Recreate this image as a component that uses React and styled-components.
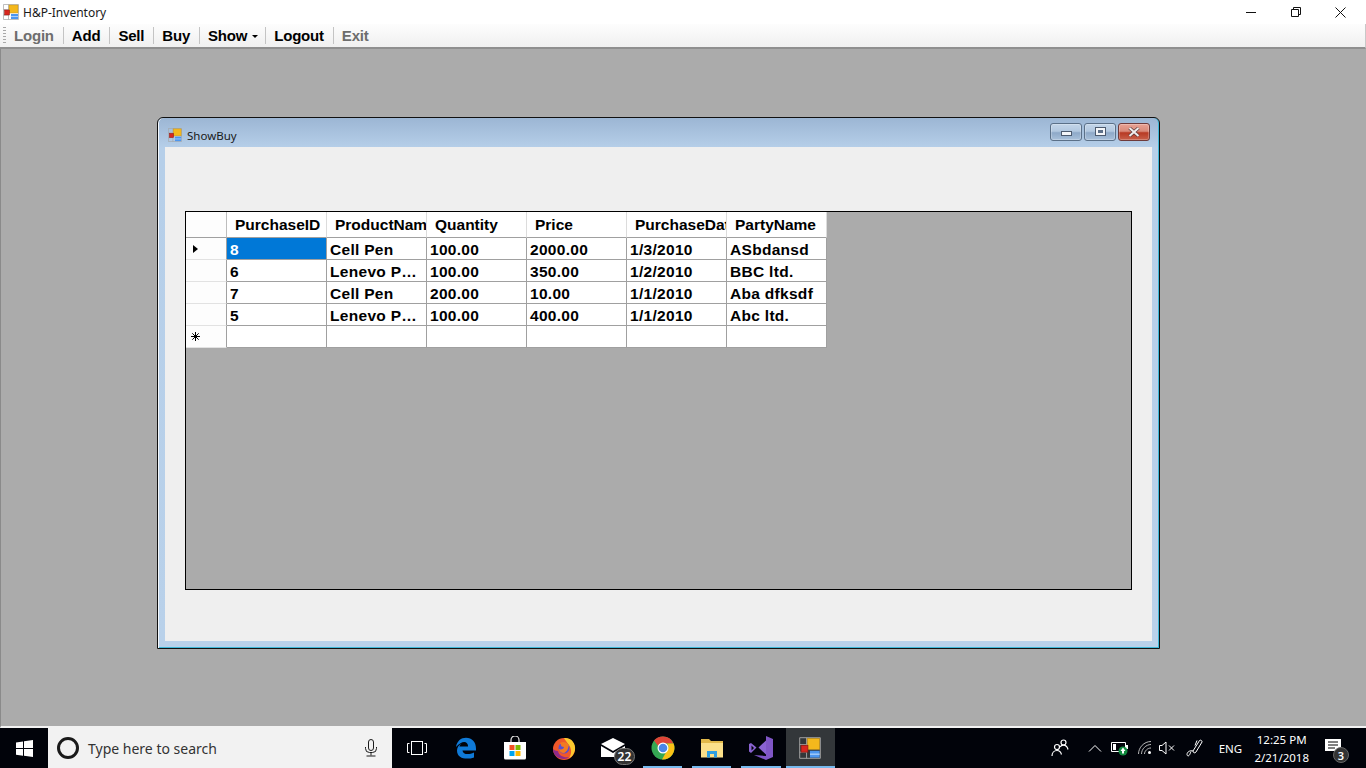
// libs
import styled, { createGlobalStyle } from 'styled-components'

const columns = ['PurchaseID', 'ProductName', 'Quantity', 'Price', 'PurchaseDate', 'PartyName']

const rows = [
    ['8', 'Cell Pen', '100.00', '2000.00', '1/3/2010', 'ASbdansd'],
    ['6', 'Lenevo Pen Drive', '100.00', '350.00', '1/2/2010', 'BBC ltd.'],
    ['7', 'Cell Pen', '200.00', '10.00', '1/1/2010', 'Aba dfksdf'],
    ['5', 'Lenevo Pen Drive', '100.00', '400.00', '1/1/2010', 'Abc ltd.'],
    ['', '', '', '', '', ''],
]

const menu = [
    { label: 'Login', off: true },
    { label: 'Add' },
    { label: 'Sell' },
    { label: 'Buy' },
    { label: 'Show', caret: true },
    { label: 'Logout' },
    { label: 'Exit', off: true },
]

const AppIcon = ({ size = 16 }) => (
    <svg width={size} height={size} viewBox="0 0 16 16">
        <path d="M.5.5h15v15H.5z M.5 5.5h6 M5.500.5v15 M.5 11h5" fill="none" stroke="#a3a3a3" strokeWidth=".7" />
        <rect x="6" y="1" width="9" height="8" fill="#f4b81c" stroke="#c29422" strokeWidth=".5" />
        <rect x="1.500" y="6" width="5" height="5" fill="#d8261f" stroke="#8a1a14" strokeWidth=".5" />
        <rect x="8" y="10" width="7" height="5" fill="#4d96ee" />
        <rect x="8" y="12" width="7" height="1" fill="#a9cdf8" />
    </svg>
)

const Windows = () => (
    <svg width="17" height="17" viewBox="0 0 17 17" fill="#fff">
        <path d="M0 2.400 7 1.400v6.700H0zM8 1.300 17 0v8.100H8zM0 9h7v6.700l-7-1zM8 9h9v8l-9-1.300z" />
    </svg>
)

const Mic = () => (
    <svg width="14" height="18" viewBox="0 0 14 18" fill="none" stroke="#1c1c1c" strokeWidth="1">
        <rect x="4.500" y=".5" width="5" height="11" rx="2.500" />
        <path d="M1.500 8v1.500a4 4 0 0 0 4 4h3a4 4 0 0 0 4-4V8M7 13.500v3M2.500 17h9" />
    </svg>
)

const TaskView = () => (
    <svg width="20" height="16" viewBox="0 0 20 16" fill="none" stroke="#fff" strokeWidth="1">
        <rect x="4.500" y="1.500" width="11" height="13" />
        <path d="M2.500 3.500H.5v9h2M17.500 3.500h2v9h-2" />
    </svg>
)

const Edge = () => (
    <svg width="22" height="22" viewBox="0 0 22 22">
        <path
            d="M1 10C2 4 6 .8 11 .8c6 0 10 4 10 11v1.600H7.500c.3 3.600 5.500 5 11.500 2v5c-7 2.500-17 1.500-17-7 0-3 1.500-5.300 4.500-7-1 1-1.800 2-2 3.200h8.500C13.500 5 8 2 1 10z"
            fill="#0f7ad8"
        />
    </svg>
)

const Store = () => (
    <svg width="24" height="24" viewBox="0 0 24 24">
        <path d="M8 6V4a4 4 0 0 1 8 0v2" fill="none" stroke="#e8e8e8" strokeWidth="1.200" />
        <path d="M1 6h22v16a1.500 1.500 0 0 1-1.500 1.500h-19A1.500 1.500 0 0 1 1 22z" fill="#fff" />
        <rect x="6.500" y="9" width="5" height="5" fill="#f25022" />
        <rect x="12.500" y="9" width="5" height="5" fill="#7fba00" />
        <rect x="6.500" y="15" width="5" height="5" fill="#00a4ef" />
        <rect x="12.500" y="15" width="5" height="5" fill="#ffb900" />
    </svg>
)

const Firefox = () => (
    <svg width="24" height="24" viewBox="0 0 24 24">
        <circle cx="12" cy="13" r="11" fill="#f0582a" />
        <path d="M12 2c7-1 12 5 11 12-1 4-3 7-6 8 3-4 3-10-1-14-1-2-3-4-4-6z" fill="#fcc92e" />
        <path d="M1 13c0 6 5 10 11 10 2 0 4-1 5-2-5 1-10-1-11-6-2 0-4-1-5-2z" fill="#8e2a8a" />
        <circle cx="12" cy="12" r="5.500" fill="#5a4fcf" />
        <path d="M8 7c3-2 7-1 9 2-1 3-1 6-5 8-3 0-5-2-5-4 2 1 5 0 5-2-2 0-3-1-3-2 0-1-1-1-1-2z" fill="#f47a20" />
    </svg>
)

const Mail = () => (
    <svg width="24" height="20" viewBox="0 0 24 20">
        <path d="M0 6 12 0l12 6-12 7z" fill="#fff" />
        <path d="M0 8l12 7 12-7v11H0z" fill="#fff" />
    </svg>
)

const Chrome = () => (
    <svg width="24" height="24" viewBox="0 0 24 24">
        <circle cx="12" cy="12" r="11.500" fill="#35a853" />
        <path d="M12 .5A11.500 11.500 0 0 1 22.500 7.500H12a4.500 4.500 0 0 0-4.500 3L3 4.500A11.500 11.500 0 0 1 12 .5z" fill="#de4437" />
        <path d="M22.500 7.500A11.500 11.500 0 0 1 11 23.500l5-9a5 5 0 0 0 0-7z" fill="#fbc116" />
        <circle cx="12" cy="12" r="5.500" fill="#fff" />
        <circle cx="12" cy="12" r="4.300" fill="#4a86e8" />
    </svg>
)

const Explorer = () => (
    <svg width="22" height="20" viewBox="0 0 22 20">
        <path d="M0 1h8l2 2h12v4H0z" fill="#e2b94a" />
        <path d="M0 5h22v14.500H0z" fill="#fbe08a" />
        <path d="M6 19.500V13h10v6.500h-3V16H9v3.500z" fill="#2f9fe0" />
    </svg>
)

const VisualStudio = () => (
    <svg width="24" height="24" viewBox="0 0 24 24">
        <path d="M17 0l7 3v18l-7 3L5 19l12 1z" fill="#7f56c6" />
        <path d="M17 4.500v14l-7.500-7zM0 8l2-1 5.500 4.500L2 17l-2-1.500zM2.500 9.500v5l2.500-2.500z" fill="#8a63d2" />
    </svg>
)

const People = () => (
    <svg width="18" height="18" viewBox="0 0 18 18" fill="none" stroke="#fff" strokeWidth="1.200">
        <circle cx="6" cy="8" r="2.500" />
        <path d="M1 17c0-3 2-5.500 5-5.500s4 2 4.500 4" />
        <circle cx="12.500" cy="3.500" r="2.500" />
        <path d="M9 8c1-1.500 2.500-2 4-1.800 2 .3 3.500 2 4 4.300" />
    </svg>
)

const Caret = () => (
    <svg width="14" height="8" viewBox="0 0 14 8" fill="none" stroke="#fff" strokeWidth="1">
        <path d="M1 7.500 7 1.500l6 6" />
    </svg>
)

const Battery = () => (
    <svg width="18" height="16" viewBox="0 0 18 16">
        <path d="M.5 2.500h14v9H.5z" fill="none" stroke="#fff" />
        <rect x="2" y="4" width="3" height="6" fill="#fff" />
        <rect x="15" y="5" width="2" height="4" fill="#fff" />
        <circle cx="12" cy="11" r="4.500" fill="#10893e" />
        <path d="M12 7.500 14.500 11h-1.500v2.500h-2V11H9.500z" fill="#fff" />
    </svg>
)

const Wifi = () => (
    <svg width="14" height="14" viewBox="0 0 14 14" fill="none" stroke="#b8b8b8" strokeWidth="1">
        <path d="M.5 13C.5 6.500 6 .5 13 .5M3.500 13C3.500 8 8 3.500 13 3.500M6.500 13c0-3 3-6 6.500-6" />
        <circle cx="11.500" cy="11.500" r="1.500" fill="#fff" stroke="none" />
    </svg>
)

const Volume = () => (
    <svg width="16" height="14" viewBox="0 0 16 14" fill="none" stroke="#fff" strokeWidth="1">
        <path d="M.5 4.500h2.500L7 1v12L3 9.500H.5zM10 4.500l5 5M15 4.500l-5 5" />
    </svg>
)

const Pen = () => (
    <svg width="18" height="18" viewBox="0 0 18 18" fill="none" stroke="#fff" strokeWidth="1">
        <path d="M7 12 13.500 1.500c1-1 3 .3 2.500 1.500L10 13c-1 1.500-3 1-3-1z" />
        <path d="M7 12c-3-1-6 1-6 3.500 0 1 1 2 2 1s1-2 2-4M11 1.500l-2 5" />
    </svg>
)

const Notify = () => (
    <svg width="16" height="14" viewBox="0 0 16 14">
        <path d="M0 0h16v12H0z" fill="#fff" />
        <path d="M3 3h10M3 6h10M3 9h7" stroke="#000" strokeWidth="1" />
    </svg>
)

const NewRow = () => (
    <svg width="9" height="9" viewBox="0 0 9 9" stroke="#000" strokeWidth="1">
        <path d="M4.500 0v9M0 4.500h9M1.300 1.300l6.400 6.400M7.700 1.300l-6.400 6.400" />
    </svg>
)

const apps = [
    { icon: <TaskView /> },
    { icon: <Edge /> },
    { icon: <Store /> },
    { icon: <Firefox /> },
    { icon: <Mail />, badge: '22' },
    { icon: <Chrome />, open: true },
    { icon: <Explorer />, open: true },
    { icon: <VisualStudio />, open: true },
    { icon: <AppIcon size={22} />, open: true, active: true },
]

const App = () => {
    return (
        <Page>
            <GlobalStyle />
            <TitleBar>
                <AppIcon />
                <TitleText>H&amp;P-Inventory</TitleText>
                <WindowControls>
                    <ControlButton>
                        <svg width="10" height="10" viewBox="0 0 10 10" stroke="#111"><path d="M0 5.500h10" /></svg>
                    </ControlButton>
                    <ControlButton>
                        <svg width="10" height="10" viewBox="0 0 10 10" fill="none" stroke="#111"><path d="M.5 2.500h7v7h-7zM2.500 2.500v-2h7v7h-2" /></svg>
                    </ControlButton>
                    <ControlButton>
                        <svg width="11" height="11" viewBox="0 0 11 11" stroke="#111"><path d="M.5.500l10 10M10.500.500l-10 10" /></svg>
                    </ControlButton>
                </WindowControls>
            </TitleBar>

            <Toolbar>
                <Grip />
                {menu.map((item, i) => (
                    <MenuItem key={item.label} $off={item.off} $last={i === menu.length - 1} $caret={item.caret}>
                        {item.label}
                        {item.caret && <MenuCaret />}
                    </MenuItem>
                ))}
            </Toolbar>

            <Workspace>
                <ChildWindow>
                    <ChildTitle>
                        <AppIcon size={14} />
                        <ChildTitleText>ShowBuy</ChildTitleText>
                        <ChildControls>
                            <ChildButton>
                                <MinGlyph />
                            </ChildButton>
                            <ChildButton>
                                <svg width="11" height="9" viewBox="0 0 11 9"><rect x=".5" y=".5" width="10" height="8" fill="#f4f6f9" stroke="#4c5a6e" /><rect x="3" y="3" width="5" height="3" fill="#5d7088" /></svg>
                            </ChildButton>
                            <ChildButton $close>
                                <svg width="12" height="10" viewBox="0 0 12 10"><path d="M1.500 1l9 8M10.500 1l-9 8" stroke="#5a3a3a" strokeWidth="3.400" /><path d="M1.500 1l9 8M10.500 1l-9 8" stroke="#f2eeee" strokeWidth="2" /></svg>
                            </ChildButton>
                        </ChildControls>
                    </ChildTitle>
                    <Client>
                        <DataGrid>
                            <HeaderRow>
                                <RowHeader $top />
                                {columns.map(name => <HeaderCell key={name}>{name}</HeaderCell>)}
                            </HeaderRow>
                            {rows.map((row, r) => (
                                <Row key={r}>
                                    <RowHeader>
                                        {r === 0 && <RowArrow />}
                                        {r === rows.length - 1 && <NewRow />}
                                    </RowHeader>
                                    {row.map((value, c) => (
                                        <Cell key={c} $selected={r === 0 && c === 0}>{value}</Cell>
                                    ))}
                                </Row>
                            ))}
                        </DataGrid>
                    </Client>
                </ChildWindow>
            </Workspace>

            <Taskbar>
                <StartButton><Windows /></StartButton>
                <SearchBox>
                    <Cortana />
                    <SearchText>Type here to search</SearchText>
                    <Mic />
                </SearchBox>
                <AppList>
                    {apps.map((app, i) => (
                        <AppButton key={i} $open={app.open} $active={app.active}>
                            {app.icon}
                            {app.badge && <AppBadge>{app.badge}</AppBadge>}
                        </AppButton>
                    ))}
                </AppList>
                <Tray>
                    <TrayItem $w={32}><People /></TrayItem>
                    <TrayItem $w={22} $gap={8}><Caret /></TrayItem>
                    <TrayItem $w={28}><Battery /></TrayItem>
                    <TrayItem $w={22}><Wifi /></TrayItem>
                    <TrayItem $w={22}><Volume /></TrayItem>
                    <TrayItem $w={22} $gap={6}><Pen /></TrayItem>
                    <TrayItem $w={46}><TrayText>ENG</TrayText></TrayItem>
                    <TrayItem $w={56}>
                        <Clock>
                            <span>12:25 PM</span>
                            <span>2/21/2018</span>
                        </Clock>
                    </TrayItem>
                    <TrayItem $w={48}>
                        <NotifyBox>
                            <Notify />
                            <NotifyBadge>3</NotifyBadge>
                        </NotifyBox>
                    </TrayItem>
                </Tray>
            </Taskbar>
        </Page>
    )
}

export default App

// styles
const GlobalStyle = createGlobalStyle`
    html, body {
        margin: 0;
        padding: 0;
        overflow: hidden;
    }

    * {
        box-sizing: border-box;
    }
`

const Page = styled.div`
    display: flex;
    flex-direction: column;
    width: 1366px;
    height: 768px;
    background: #fff;
    font-family: "Liberation Sans", Arial, sans-serif;
`

const TitleBar = styled.div`
    display: flex;
    align-items: center;
    flex: 0 0 24px;
    padding-left: 3px;
    padding-right: 3px;
    background: #fff;
`

const TitleText = styled.span`
    margin-left: 4px;
    font-family: "Noto Sans", sans-serif;
    font-size: 12px;
    color: #1a1a1a;
`

const WindowControls = styled.div`
    display: flex;
    margin-left: auto;
    height: 100%;
`

const ControlButton = styled.div`
    display: flex;
    align-items: center;
    justify-content: center;
    width: 45px;
    height: 100%;
`

const Toolbar = styled.div`
    display: flex;
    align-items: center;
    flex: 0 0 25px;
    padding-left: 3px;
    padding-bottom: 1px;
    background: linear-gradient(#fdfdfd, #f0f0f0);
    border-bottom: 2px solid #8f8f8f;
    border-right: 1px solid #c8c8c8;
`

const Grip = styled.div`
    width: 3px;
    height: 17px;
    margin-right: 8px;
    background: repeating-linear-gradient(#a8a8a8 0 1px, transparent 1px 3px);
`

const MenuItem = styled.div`
    display: flex;
    align-items: center;
    height: 17px;
    padding: 0 ${props => (props.$caret ? '7px' : '9px')} 0 ${props => (props.$off ? '0' : '8px')};
    border-right: ${props => (props.$last ? 'none' : '1px solid #c4c4c4')};
    font-size: 15px;
    font-weight: 700;
    letter-spacing: -.2px;
    color: ${props => (props.$off ? '#6d6d6d' : '#000')};

    &:last-child {
        padding-left: 8px;
    }
`

const MenuCaret = styled.i`
    width: 0;
    height: 0;
    margin-left: 5px;
    margin-top: 2px;
    border-left: 3px solid transparent;
    border-right: 3px solid transparent;
    border-top: 3px solid #000;
`

const Workspace = styled.div`
    position: relative;
    flex: 1;
    background: #ababab;
    border-left: 1px solid #8a8a8a;
    border-bottom: 2px solid #f2f2f2;
`

const ChildWindow = styled.div`
    position: absolute;
    left: 156px;
    top: 68px;
    display: flex;
    flex-direction: column;
    width: 1003px;
    height: 532px;
    padding: 0 7px 7px;
    border: 1px solid #111;
    border-radius: 6px 6px 0 0;
    background: linear-gradient(#9cb6d4 0, #b6cfe9 30px, #b9d1ea 100%);
    box-shadow: inset 1px 0 0 #f4f8fc, inset 0 -1px 0 #3fb8d8, inset -1px 0 0 #3fb8d8;
`

const ChildTitle = styled.div`
    display: flex;
    align-items: center;
    flex: 0 0 29px;
    margin: 0 -5px;
    padding: 5px 0 0 8px;
`

const ChildTitleText = styled.span`
    margin-left: 5px;
    font-family: "Noto Sans", sans-serif;
    font-size: 11.500px;
    color: #1a1a1a;
`

const ChildControls = styled.div`
    display: flex;
    gap: 2px;
    margin-left: auto;
    margin-right: 7px;
    margin-top: -7px;
`

const ChildButton = styled.div`
    display: flex;
    align-items: center;
    justify-content: center;
    width: 32px;
    height: 18px;
    border: 1px solid ${props => (props.$close ? '#6e3a3a' : '#5b7088')};
    border-radius: 3px;
    background: ${props => (props.$close
        ? 'linear-gradient(#e9a294 0, #d98a7a 45%, #b83a24 55%, #c8604a 100%)'
        : 'linear-gradient(#c3d5e9 0, #b2c8e0 45%, #8ea9c8 55%, #a9c1db 100%)')};
    box-shadow: inset 0 0 0 1px rgba(255, 255, 255, .25);
`

const MinGlyph = styled.i`
    width: 11px;
    height: 5px;
    margin-top: 4px;
    background: #f4f6f9;
    border: 1px solid #4c5a6e;
`

const Client = styled.div`
    flex: 1;
    padding: 64px 0 0 20px;
    background: #efefef;
`

const DataGrid = styled.div`
    width: 947px;
    height: 379px;
    border: 1px solid #000;
    background: #ababab;
    font-size: 15.500px;
    font-weight: 700;
    color: #000;
`

const HeaderRow = styled.div`
    display: flex;
    height: 26px;
`

const Row = styled.div`
    display: flex;
    height: 22px;
`

const RowHeader = styled.div`
    display: flex;
    align-items: center;
    justify-content: center;
    flex: 0 0 41px;
    padding-right: 22px;
    background: #fdfdfd;
    border-right: 1px solid ${props => (props.$top ? '#bdbdbd' : '#a0a0a0')};
    border-bottom: 1px solid ${props => (props.$top ? '#a0a0a0' : '#e2e2e2')};
`

const RowArrow = styled.i`
    width: 0;
    height: 0;
    border-top: 4px solid transparent;
    border-bottom: 4px solid transparent;
    border-left: 5px solid #000;
`

const HeaderCell = styled.div`
    flex: 0 0 100px;
    padding: 3px 0 0 8px;
    overflow: hidden;
    white-space: nowrap;
    line-height: 20px;
    background: #fff;
    border-right: 1px solid #dcdcdc;
    border-bottom: 1px solid #a0a0a0;
`

const Cell = styled.div`
    flex: 0 0 100px;
    padding: 2px 8px 0 3px;
    overflow: hidden;
    white-space: nowrap;
    text-overflow: ellipsis;
    line-height: 19px;
    letter-spacing: .3px;
    background: ${props => (props.$selected ? '#0078d7' : '#fff')};
    color: ${props => (props.$selected ? '#fff' : '#000')};
    border-right: 1px solid #a0a0a0;
    border-bottom: 1px solid #a0a0a0;
`

const Taskbar = styled.div`
    display: flex;
    align-items: center;
    flex: 0 0 40px;
    background: #01030a;
`

const StartButton = styled.div`
    display: flex;
    align-items: center;
    justify-content: center;
    flex: 0 0 48px;
    height: 100%;
`

const SearchBox = styled.div`
    display: flex;
    align-items: center;
    flex: 0 0 344px;
    height: 100%;
    padding: 0 14px 0 9px;
    background: #f2f2f2;
`

const Cortana = styled.i`
    flex: 0 0 22px;
    height: 22px;
    border: 3px solid #1a1a1a;
    border-radius: 50%;
`

const SearchText = styled.span`
    flex: 1;
    margin-left: 9px;
    font-family: "Noto Sans", sans-serif;
    font-size: 14px;
    color: #333;
`

const AppList = styled.div`
    display: flex;
    height: 100%;
`

const AppButton = styled.div`
    position: relative;
    display: flex;
    align-items: center;
    justify-content: center;
    flex: 0 0 49.200px;
    height: 100%;
    background: ${props => (props.$active ? '#33373a' : 'transparent')};

    &::after {
        content: '';
        display: ${props => (props.$open ? 'block' : 'none')};
        position: absolute;
        left: ${props => (props.$active ? '0' : '5px')};
        right: ${props => (props.$active ? '0' : '5px')};
        bottom: 0;
        height: 2px;
        background: #76b9ed;
    }
`

const AppBadge = styled.span`
    position: absolute;
    right: 3px;
    bottom: 3px;
    display: flex;
    align-items: center;
    justify-content: center;
    width: 21px;
    height: 17px;
    border-radius: 9px;
    border: 1px solid #777;
    background: #333;
    color: #fff;
    font-family: "Noto Sans", sans-serif;
    font-size: 12px;
    font-weight: 600;
`

const Tray = styled.div`
    display: flex;
    align-items: center;
    height: 100%;
    margin-left: auto;
    padding-right: 9px;
    color: #fff;
`

const TrayItem = styled.div`
    display: flex;
    align-items: center;
    justify-content: center;
    flex: 0 0 ${props => props.$w}px;
    margin-left: ${props => props.$gap || 0}px;
`

const TrayText = styled.span`
    font-family: "Noto Sans", sans-serif;
    font-size: 11.500px;
    padding-left: 2px;
`

const Clock = styled.div`
    display: flex;
    flex-direction: column;
    align-items: center;
    gap: 1px;
    padding-left: 2px;
    font-family: "Noto Sans", sans-serif;
    font-size: 11.500px;
    line-height: 17px;
    white-space: nowrap;
`

const NotifyBox = styled.div`
    position: relative;
    display: flex;
    width: 16px;
    height: 14px;
    margin-top: -4px;
`

const NotifyBadge = styled.span`
    position: absolute;
    left: 8px;
    top: 8px;
    display: flex;
    align-items: center;
    justify-content: center;
    width: 16px;
    height: 16px;
    border-radius: 50%;
    background: #333;
    border: 1px solid #666;
    font-family: "Noto Sans", sans-serif;
    font-size: 11px;
    font-weight: 600;
`
